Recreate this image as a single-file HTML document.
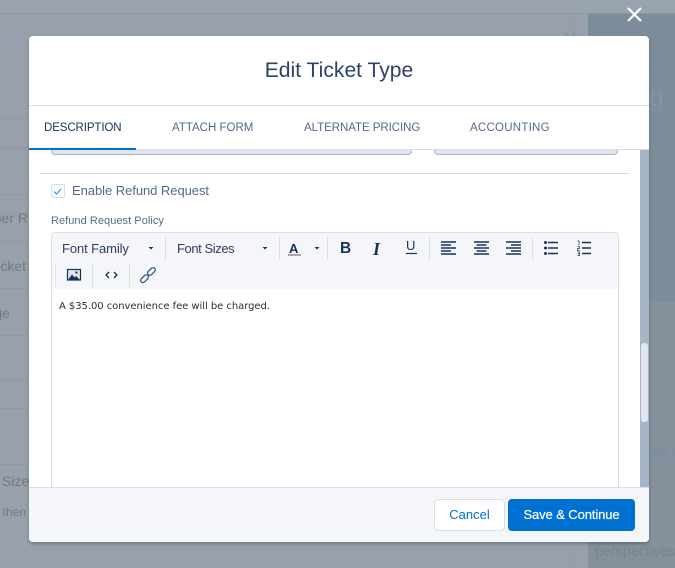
<!DOCTYPE html>
<html><head><meta charset="utf-8"><style>
html,body{margin:0;padding:0;width:675px;height:568px;overflow:hidden;background:#98a1ab;font-family:"Liberation Sans",sans-serif}
.a{position:absolute;white-space:nowrap}
.tab{font-size:11.500px;color:#54698d;top:86px;line-height:13px}
.sep{position:absolute;width:1px;height:23px;background:#d8dde6}
svg{position:absolute;overflow:visible}
.bg{position:absolute;left:0;width:29px;overflow:hidden;white-space:nowrap;color:#6f7a85;font-size:14px;line-height:18px;height:18px}
.bg span{position:absolute;top:0;white-space:nowrap}
.line{position:absolute;left:0;width:29px;height:1px;background:#8f99a4}
</style></head><body>
<div class="a" style="left:0;top:0;width:675px;height:568px;overflow:hidden">
<div class="a" style="left:0;top:0;width:675px;height:13px;background:#99a3ad"></div>
<div class="a" style="left:0;top:13px;width:675px;height:1px;background:#8f99a3"></div>
<div class="a" style="left:588px;top:14px;width:87px;height:288px;background:#7d8c9a"></div>
<div class="a" style="left:588px;top:302px;width:87px;height:266px;background:#84909b"></div>
<div class="a" style="left:573px;top:14px;width:1px;height:554px;background:#929ba5"></div>
<div class="line" style="top:118px"></div><div class="line" style="top:147px"></div><div class="line" style="top:194px"></div><div class="line" style="top:241px"></div><div class="line" style="top:288px"></div><div class="line" style="top:335px"></div><div class="line" style="top:379px"></div><div class="line" style="top:408px"></div><div class="line" style="top:464px"></div>
<div class="bg" style="top:209px"><span style="right:1px">Number R</span></div>
<div class="bg" style="top:257px"><span style="right:3px">Ticket</span></div>
<div class="bg" style="top:304px"><span style="right:19px">Page</span></div>
<div class="bg" style="top:472px"><span style="left:2px">Sizes</span></div>
<div class="bg" style="top:503px;font-size:12px"><span style="right:3px">e then</span></div>
<div class="a" style="left:649px;top:84px;font-size:27px;line-height:27px;color:#86939f">g</div>
<div class="a" style="left:648px;top:444px;width:27px;height:20px;overflow:hidden;font-size:15px;line-height:18px;color:#7b8a9c">ain t</div>
<div class="a" style="left:595px;top:544px;width:80px;height:20px;overflow:hidden;font-size:14.300px;line-height:17px;color:#77838e">perspectives</div>
<svg style="left:0;top:0" width="675" height="568"><path d="M565 33L575 43M575 33L565 43" stroke="#87919c" stroke-width="1.500" fill="none"/><path d="M628 8L641 21M641 8L628 21" stroke="#fff" stroke-width="2.200" fill="none"/></svg>

<div class="a" style="left:29px;top:36px;width:620px;height:506px;background:#fff;border-radius:4px;overflow:hidden;box-shadow:0 2px 3px rgba(40,50,60,.35)">
 <div class="a" style="left:0;top:0;width:620px;height:69px;border-bottom:1px solid #d8dde6;text-align:center;font-size:21.100px;line-height:70px;color:#2a4468">Edit Ticket Type</div>
 <div class="a" style="left:0;top:70px;width:620px;height:43px;border-bottom:1px solid #d8dde6"></div>
 <div class="a" style="left:0;top:112px;width:107px;height:1.500px;background:#0070d2"></div>
 <div class="a" style="left:611px;top:114px;width:9px;height:338px;background:#a6b5c6"></div>
 <div class="a" style="left:612px;top:307px;width:7px;height:79px;background:#e0e5ee;border-radius:3px"></div>
 <div class="a" style="left:22px;top:114px;width:359px;height:4px;background:#e0e5ee;border:1px solid #a8b7c7;border-top:0;border-radius:0 0 4px 4px"></div>
 <div class="a" style="left:405px;top:114px;width:182px;height:4px;background:#e0e5ee;border:1px solid #a8b7c7;border-top:0;border-radius:0 0 4px 4px"></div>
 <div class="a" style="left:11px;top:137px;width:589px;height:1px;background:#d8dde6"></div>
 <div class="a" style="left:22px;top:148px;width:12px;height:12px;border:1px solid #d8dde6;border-radius:2px;background:#fff"></div>
 <svg style="left:0;top:0" width="620" height="506"><path d="M25 155.500L27.500 158L32 153" stroke="#1589ee" stroke-width="1" fill="none"/></svg>
 <div class="a" style="left:43px;top:147px;font-size:13px;line-height:15px;color:#54698d;letter-spacing:-.05px">Enable Refund Request</div>
 <div class="a" style="left:22px;top:178px;font-size:11px;line-height:14px;color:#54698d;letter-spacing:.05px">Refund Request Policy</div>
 <div class="a" style="left:22px;top:196px;width:566px;height:270px;border:1px solid #d8dde6;border-radius:4px 4px 0 0;background:#fff"></div>
 <div class="a" style="left:23px;top:197px;width:566px;height:56px;background:#f4f6f9;border-radius:4px 4px 0 0"></div>
 <div class="a" style="left:33px;top:205px;font-size:13px;line-height:15px;color:#2a3f5f;letter-spacing:-.1px">Font Family</div>
 <div class="a" style="left:148px;top:205px;font-size:13px;line-height:15px;color:#2a3f5f;letter-spacing:-.42px">Font Sizes</div>
 <div class="a" style="left:260px;top:205px;font-size:13px;line-height:15px;font-weight:700;color:#16325c">A</div>
 <div class="a" style="left:30px;top:264px;line-height:14px;color:#2b2f3a;font-family:'DejaVu Sans',sans-serif;letter-spacing:-.05px;font-size:10px">A $35.00 convenience fee will be charged.</div>
 <i class="sep" style="left:136px;top:201px"></i><i class="sep" style="left:250px;top:201px"></i><i class="sep" style="left:298px;top:201px"></i><i class="sep" style="left:400px;top:201px"></i><i class="sep" style="left:503px;top:201px"></i>
 <i class="sep" style="left:26px;top:228px;background:#e4e7ee"></i><i class="sep" style="left:63px;top:228px"></i><i class="sep" style="left:100px;top:228px"></i>
 <div class="a" style="left:311px;top:204px;font-size:15.500px;line-height:18px;font-weight:700;color:#16325c">B</div>
 <div class="a" style="left:344px;top:204px;font-size:18px;line-height:18px;font-weight:700;font-style:italic;font-family:'Liberation Serif',serif;color:#16325c">I</div>
 <div class="a" style="left:377px;top:203px;font-size:13px;line-height:14px;color:#16325c">U</div>
 <svg style="left:0;top:0" width="620" height="506" fill="none" stroke="#16325c">
  <path d="M119.500 211h5l-2.500 2.500zM233.500 211h5l-2.500 2.500zM285.500 211h5l-2.500 2.500z" fill="#16325c" stroke="none"/>
  <path d="M259 219h13" stroke="#8d8d95" stroke-width="1.500"/>
  <path d="M377 217.500h11" stroke-width="1.200"/>
  <path d="M412 206h15M412 209h10M412 212h15M412 215h10M412 218h15" stroke-width="1.500"/>
  <path d="M445 206h15M447.500 209h10M445 212h15M447.500 215h10M445 218h15" stroke-width="1.500"/>
  <path d="M477 206h15M482 209h10M477 212h15M482 215h10M477 218h15" stroke-width="1.500"/>
  <path d="M519 206.500h10M519 212h10M519 217.500h10" stroke-width="1.400"/>
  <circle cx="516.500" cy="206.500" r="1.500" fill="#16325c" stroke="none"/><circle cx="516.500" cy="212" r="1.500" fill="#16325c" stroke="none"/><circle cx="516.500" cy="217.500" r="1.500" fill="#16325c" stroke="none"/>
  <path d="M553 206.500h9M553 212h9M553 217.500h9" stroke-width="1.400"/>
  <path d="M548.500 205h1.500v4M548.500 210.500h2v2h-2v2h2M548.500 216h2v1.500h-1.500h1.500v2h-2" stroke-width=".7"/>
  <rect x="38.500" y="233.500" width="13" height="10.500" fill="#dfe4ec" stroke="#16325c" stroke-width="1.200"/>
  <path d="M39 244l4-5.500 2.500 3 1.500-1.500 4 4z" fill="#16325c" stroke="none"/><circle cx="47.500" cy="236.500" r="1.100" fill="#16325c" stroke="none"/>
  <path d="M80 236l-3 3 3 3M85 236l3 3-3 3" stroke-width="1.300"/>
  <g stroke="#375a85" stroke-width="1.300"><rect x="111" y="240.500" width="9" height="4.500" rx="2.200" transform="rotate(-45 115.500 242.700)"/><rect x="118" y="233.200" width="9" height="4.500" rx="2.200" transform="rotate(-45 122.500 235.500)"/></g>
 </svg>
 <div class="a" style="left:0;top:451px;width:620px;height:55px;background:#f4f6f9;border-top:1px solid #d8dde6"></div>
 <div class="a" style="left:405px;top:463px;width:69px;height:30px;background:#fff;border:1px solid #d8dde6;border-radius:4px;text-align:center;line-height:30px;font-size:13px;color:#0070d2">Cancel</div>
 <div class="a" style="left:479px;top:463px;width:127px;height:32px;background:#0070d2;border-radius:4px;text-align:center;line-height:31px;font-size:13px;color:#fff;letter-spacing:-.1px;-webkit-text-stroke:.2px #fff">Save &amp; Continue</div>
 <div class="a tab" style="left:15px;color:#16325c;letter-spacing:-.1px">DESCRIPTION</div>
 <div class="a tab" style="left:143px">ATTACH FORM</div>
 <div class="a tab" style="left:275px;letter-spacing:-.05px">ALTERNATE PRICING</div>
 <div class="a tab" style="left:441px;letter-spacing:.25px">ACCOUNTING</div>
</div>
</div>
</body></html>
